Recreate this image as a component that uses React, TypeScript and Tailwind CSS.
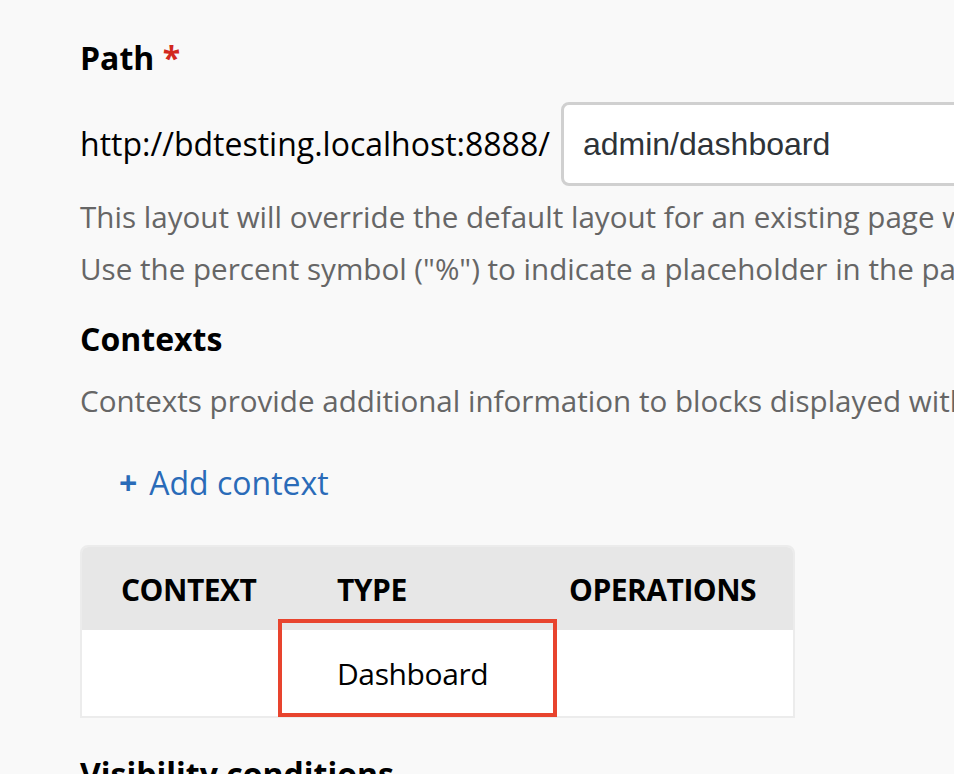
import React from "react";

export default function App() {
  return (
    <div
      className="w-[954px] h-[774px] overflow-hidden bg-[#f9f9f9] relative"
      style={{ fontFamily: '"Open Sans", "Noto Sans", sans-serif' }}
    >
      <div className="pl-[80px] pt-[34px]">
        <div className="text-[32px] font-bold leading-[48px] text-black">
          Path <span className="text-[#d2281e]">*</span>
        </div>
        <div className="flex items-center mt-[20px] whitespace-nowrap">
          <span className="text-[32px] text-black leading-[40px]">http://bdtesting.localhost:8888/</span>
          <div className="ml-[11px] h-[84px] w-[600px] shrink-0 rounded-[8px] border-[3px] border-[#d0d0d0] bg-white flex items-center pl-[19px]">
            <span
              className="text-[32px] text-[#2e3338]"
              style={{ fontFamily: '"Liberation Sans", Arial, sans-serif' }}
            >
              admin/dashboard
            </span>
          </div>
        </div>
        <div className="mt-[5px] text-[29.6px] leading-[52px] text-[#666] whitespace-nowrap">
          <div>This layout will override the default layout for an existing page with the same path.</div>
          <div>Use the percent symbol ("%") to indicate a placeholder in the path.</div>
        </div>
        <div className="mt-[20px] text-[32px] font-bold leading-[48px] text-black">Contexts</div>
        <div className="mt-[12px] text-[29.6px] leading-[52px] text-[#666] whitespace-nowrap">
          Contexts provide additional information to blocks displayed within this layout.
        </div>
        <div className="mt-[32px] pl-[39px] text-[32px] leading-[48px] text-[#2a6bb8] flex items-center">
          <span className="font-bold mr-[12px]">+</span>
          <span>Add context</span>
        </div>
        <div className="mt-[38px] w-[715px] rounded-t-[8px] border-2 border-[#ececec] overflow-hidden">
          <div className="flex h-[83px] items-center pt-[1px] bg-[#e7e7e7] text-[30px] font-bold text-black tracking-[-0.5px]">
            <div className="w-[216px] pl-[39px]">CONTEXT</div>
            <div className="w-[232px] pl-[39px]">TYPE</div>
            <div className="flex-1 pl-[39px]">OPERATIONS</div>
          </div>
          <div className="flex h-[86px] items-center bg-white text-[30px] text-black tracking-[-0.4px]">
            <div className="w-[216px]"></div>
            <div className="w-[232px] pl-[39px]">Dashboard</div>
            <div className="flex-1"></div>
          </div>
        </div>
        <div className="mt-[32px] text-[32px] font-bold leading-[48px] text-black">Visibility conditions</div>
      </div>
      <div className="absolute left-[278px] top-[619px] w-[279px] h-[98px] border-4 border-[#e8442e]"></div>
    </div>
  );
}
